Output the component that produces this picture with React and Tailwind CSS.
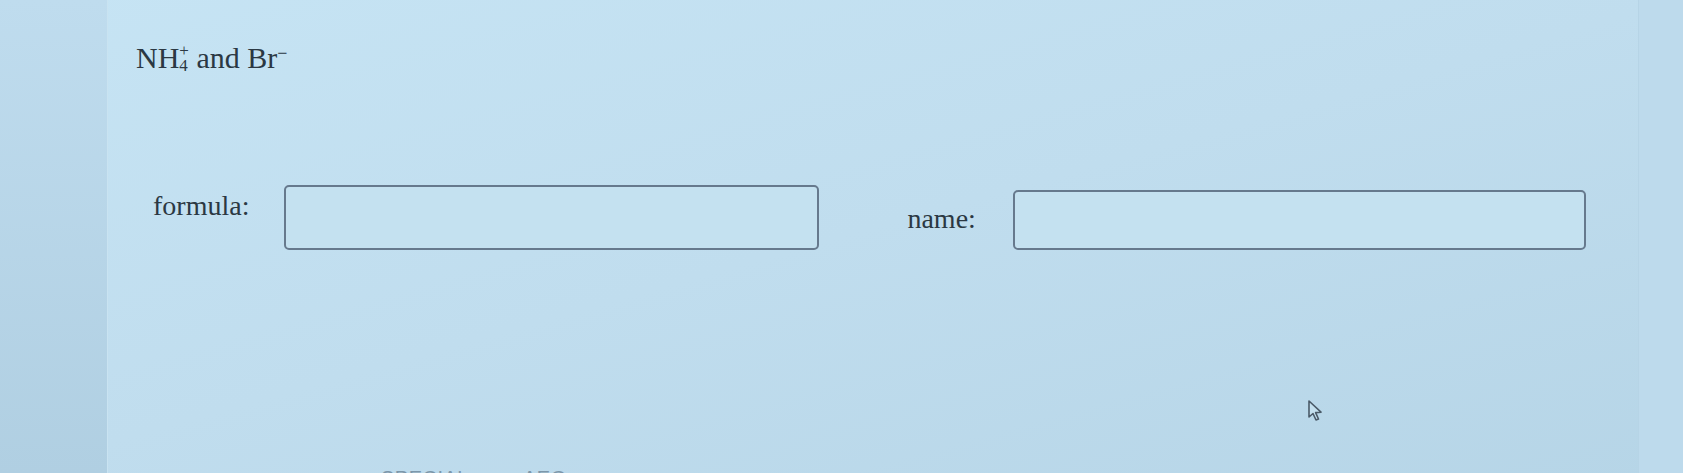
import React from "react";

const serif = { fontFamily: '"Liberation Serif", "Times New Roman", serif' };

const Cursor = () => (
  <svg width="18" height="24" viewBox="0 0 18 24" fill="none">
    <path
      d="M2 2 L2 18 L6 14.5 L9 21 L11.5 20 L8.6 13.6 L14 13.2 Z"
      stroke="#4a5a68"
      strokeWidth="1.6"
      strokeLinejoin="round"
      fill="#c4e0ef"
    />
  </svg>
);

const AnswerBox = ({ width, height }) => (
  <div
    className={`${width} ${height} rounded-[5px] border-2 border-[#66798d] bg-[#c4e1f0]`}
  />
);

export default function App() {
  return (
    <div className="flex h-[473px] w-full overflow-hidden bg-gradient-to-br from-[#c6e4f4] via-[#c0ddee] to-[#b6d5e7]">
      {/* left page edge */}
      <div className="h-full w-[108px] shrink-0 border-r border-[#c9e3f1] bg-gradient-to-b from-[#bfdcee] to-[#b0cfe2]" />

      <div className="flex flex-1 flex-col pl-[28px] text-[#2b3843]" style={serif}>
        <div className="mt-[40px] text-[30px] leading-[36px]">
          NH
          <span className="relative inline-flex flex-col align-middle text-[17px] leading-[15px] -mt-[6px]">
            <span>+</span>
            <span>4</span>
          </span>{" "}
          and Br<sup className="text-[18px]">−</sup>
        </div>

        <div className="mt-[109px] flex items-start">
          <span className="ml-[17px] mt-[5px] text-[28px] leading-[32px]">formula:</span>
          <div className="ml-[35px]">
            <AnswerBox width="w-[535px]" height="h-[65px]" />
          </div>
          <span className="ml-[88px] mt-[18px] text-[28px] leading-[32px]">name:</span>
          <div className="ml-[37px] mt-[5px]">
            <AnswerBox width="w-[573px]" height="h-[60px]" />
          </div>
        </div>

        <div className="ml-[1171px] mt-[149px]">
          <Cursor />
        </div>

        <div
          className="mt-[40px] flex gap-[54px] pl-[245px] text-[20px] uppercase tracking-wide text-[#7d97aa]"
          style={{ fontFamily: '"Liberation Sans", Arial, sans-serif' }}
        >
          <span>Special</span>
          <span>AEG</span>
        </div>
      </div>

      {/* right page edge */}
      <div className="h-full w-[45px] shrink-0 border-l border-[#b6d4e6] bg-[#bddaec]" />
    </div>
  );
}
